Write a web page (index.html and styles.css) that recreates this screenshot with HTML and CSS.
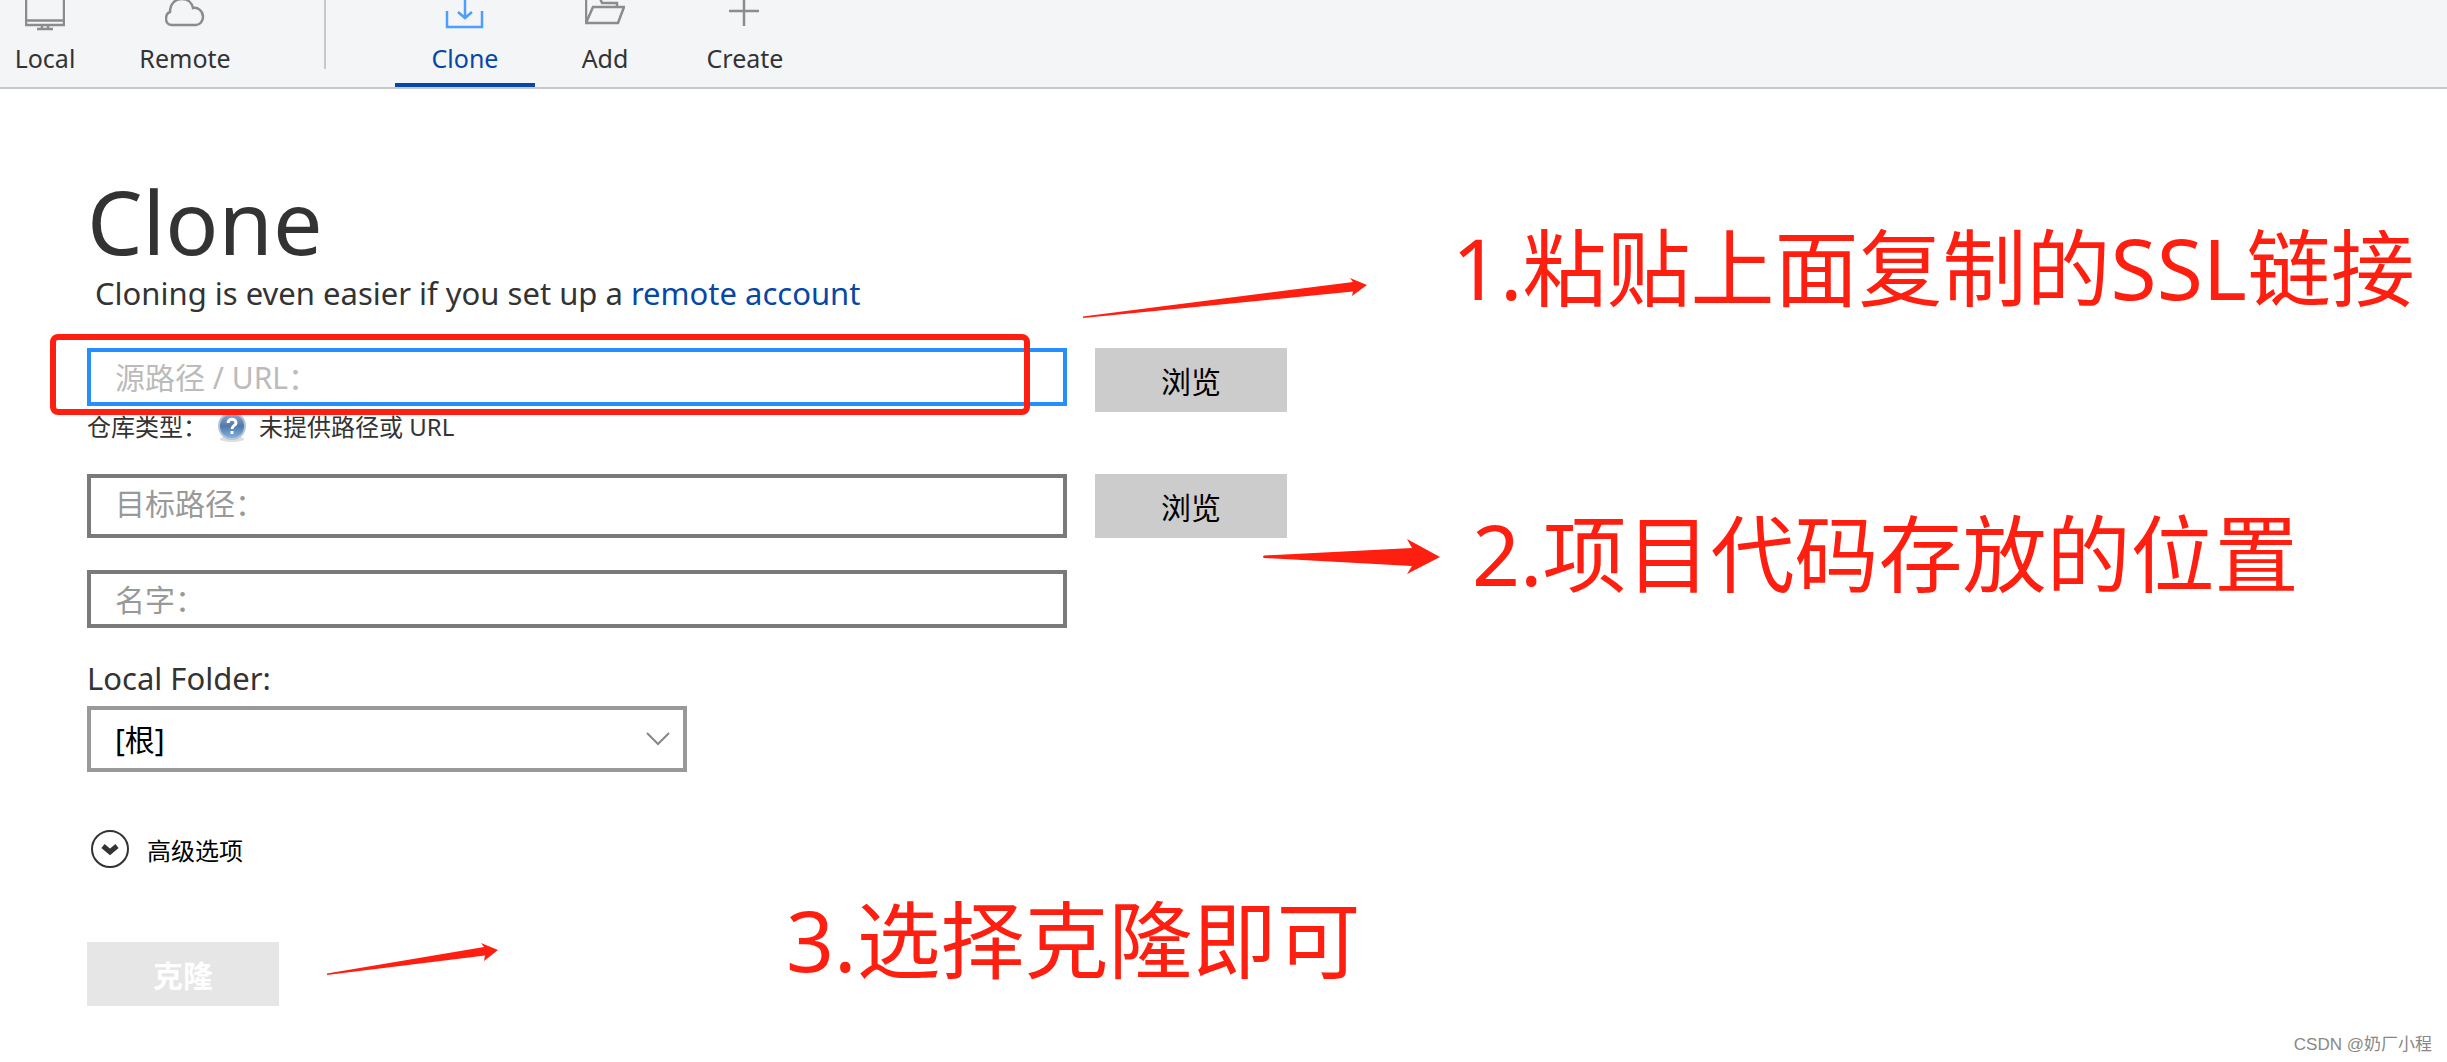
FILE: index.html
```html
<!DOCTYPE html>
<html lang="zh-CN">
  <head>
    <meta charset="utf-8">
    <meta name="viewport" content="width=device-width, initial-scale=1.0">
    <title>Clone</title>
    <link rel="stylesheet" href="styles.css">
  </head>
  <body>
    <nav class="toolbar">
      <a class="tab" href="#local">
        <svg class="tab-icon" viewBox="0 0 40 40" aria-hidden="true">
          <rect x="1" y="3" width="38" height="30"/>
          <path d="M1 28.5H39M17 33.5V37M23 33.5V37M12 37H28"/>
        </svg>
        <span>Local</span>
      </a>
      <a class="tab" href="#remote">
        <svg class="tab-icon" viewBox="0 0 40 40" aria-hidden="true">
          <path d="M7 33H31C35 33 38 29 38 25C38 19 33 15 28 16C27 11 23 7 17 7C10 7 5 12 5 20C2 21 1 24 1 27C1 30 3 33 7 33Z"/>
        </svg>
        <span>Remote</span>
      </a>
      <div class="divider"></div>
      <a class="tab active" href="#clone">
        <svg class="tab-icon" viewBox="0 0 40 40" aria-hidden="true">
          <path d="M2 19V35H37V19M20 0V25M13 20L20 26L27 20"/>
        </svg>
        <span>Clone</span>
      </a>
      <a class="tab" href="#add">
        <svg class="tab-icon" viewBox="0 0 40 40" aria-hidden="true">
          <path d="M1 31V4H14L17 11H32V15M1 31L8 15H39L33 31Z"/>
        </svg>
        <span>Add</span>
      </a>
      <a class="tab" href="#create">
        <svg class="tab-icon" viewBox="0 0 40 40" aria-hidden="true">
          <path d="M19 4V34M4 19H34"/>
        </svg>
        <span>Create</span>
      </a>
    </nav>

    <main class="page">
      <h1 class="title">Clone</h1>
      <p class="intro">Cloning is even easier if you set up a <a href="#account">remote account</a></p>

      <form class="clone-form">
        <div class="row">
          <input class="field focused" type="text" aria-label="源路径 / URL" placeholder="源路径 / URL：">
          <button class="button" type="button">浏览</button>
        </div>
        <p class="repo-type">
          <span>仓库类型：</span>
          <svg class="help-icon" viewBox="0 0 30 30" aria-hidden="true">
            <defs>
              <linearGradient id="help-fill" x1="0" y1="0" x2="0" y2="1">
                <stop offset="0" stop-color="#8fa9c9"/>
                <stop offset="0.5" stop-color="#4f78ad"/>
                <stop offset="1" stop-color="#86b0dc"/>
              </linearGradient>
            </defs>
            <ellipse class="help-shadow" cx="15" cy="27" rx="12" ry="3"/>
            <circle class="help-ring" cx="15" cy="14" r="14"/>
            <circle cx="15" cy="14" r="12" fill="url(#help-fill)"/>
            <path class="help-mark" d="M11 11C11 6 19 6 19 11C19 14 15 13 15 17M15 19V22"/>
          </svg>
          <span>未提供路径或 URL</span>
        </p>
        <div class="row">
          <input class="field tall" type="text" aria-label="目标路径" placeholder="目标路径：">
          <button class="button" type="button">浏览</button>
        </div>
        <div class="row name-row">
          <input class="field" type="text" aria-label="名字" placeholder="名字：">
        </div>

        <label class="folder-label" for="folder">Local Folder:</label>
        <div class="select-box">
          <select class="folder" id="folder">
            <option>[根]</option>
          </select>
          <svg class="chevron" viewBox="0 0 24 14" aria-hidden="true">
            <path d="M1 1L12 12L23 1"/>
          </svg>
        </div>

        <button class="advanced" type="button">
          <svg class="advanced-icon" viewBox="0 0 38 38" aria-hidden="true">
            <circle cx="19" cy="19" r="18"/>
            <path d="M12 16L19 22L26 16"/>
          </svg>
          <span>高级选项</span>
        </button>
        <button class="button submit" type="submit" disabled>克隆</button>
      </form>
    </main>

    <!-- notes drawn over the form -->
    <div class="mark-box"></div>
    <svg class="arrow arrow-1" viewBox="0 0 284 40" aria-hidden="true">
      <path d="M0 38.5L270 4L267 0L284 7L269 18L270 13.500L0 40Z"/>
    </svg>
    <p class="note note-1">1.粘贴上面复制的SSL链接</p>
    <svg class="arrow arrow-2" viewBox="0 0 177 36" aria-hidden="true">
      <path d="M1 16.500L149 9L144 0L177 18L144 35L149 27L1 19Q-1 18 1 16.500Z"/>
    </svg>
    <p class="note note-2">2.项目代码存放的位置</p>
    <svg class="arrow arrow-3" viewBox="0 0 171 32" aria-hidden="true">
      <path d="M0 30.500L157 4L154 0L171 7L157 18L158 12.500L0 32Z"/>
    </svg>
    <p class="note note-3">3.选择克隆即可</p>
    <p class="watermark">CSDN @奶厂小程</p>
  </body>
</html>
```

FILE: styles.css
```css
* {
  box-sizing: border-box;
}

body {
  position: relative;
  min-height: 100vh;
  margin: 0;
  background: #fff;
  color: #333;
  font-family: "Noto Sans", "Noto Sans CJK SC", sans-serif;
  overflow-x: hidden;
}

p {
  margin: 0;
}

a {
  color: #0747a6;
  text-decoration: none;
}

input,
select,
button {
  font-family: inherit;
}

/* toolbar */
.toolbar {
  display: flex;
  height: 89px;
  padding-right: 25px;
  margin-left: -25px;
  background: #f4f5f7;
  border-bottom: 2px solid #c8c8c8;
  overflow: hidden;
}

.tab {
  display: flex;
  flex-direction: column;
  align-items: center;
  justify-content: flex-end;
  width: 140px;
  padding-bottom: 7px;
  border-bottom: 4px solid transparent;
  color: #333;
  font-size: 25px;
  line-height: 36px;
}

.tab.active {
  color: #0747a6;
  border-color: #0747a6;
}

.tab-icon {
  flex: none;
  width: 40px;
  height: 40px;
  margin-bottom: 8px;
  fill: none;
  stroke: #8c8c8c;
  stroke-width: 2.5;
}

.active .tab-icon {
  stroke: #4c9fff;
}

.divider {
  width: 2px;
  height: 69px;
  margin: 0 69px;
  background: #c8c8c8;
}

/* form */
.page {
  padding: 82px 87px 56px;
}

.title {
  margin: 0;
  font-size: 88px;
  font-weight: 400;
  line-height: 100px;
}

.intro {
  margin: 0 0 33px 8px;
  font-size: 31px;
  line-height: 44px;
}

.clone-form {
  display: flex;
  flex-direction: column;
  align-items: flex-start;
  max-width: 1200px;
}

.row {
  display: grid;
  grid-template-columns: 1fr 192px;
  column-gap: 28px;
  align-items: start;
  width: 100%;
}

.field {
  width: 100%;
  height: 58px;
  padding: 0 24px;
  border: 4px solid #7a7a7a;
  border-radius: 0;
  background: #fff;
  font-size: 30px;
}

.field::placeholder {
  color: #999;
}

.focused {
  border-color: #268fff;
}

.focused::placeholder {
  color: #bbb;
}

.tall {
  height: 64px;
  padding-bottom: 6px;
}

.button {
  width: 192px;
  height: 64px;
  padding: 0;
  border: 0;
  background: #ccc;
  color: #000;
  font-size: 30px;
}

.repo-type {
  display: flex;
  align-items: center;
  height: 30px;
  margin-bottom: 32px;
  font-size: 24px;
  line-height: 30px;
}

.help-icon {
  width: 30px;
  height: 30px;
  margin: 0 12px 0 10px;
}

.help-shadow {
  fill: #ddd;
}

.help-ring {
  fill: #b4c4d8;
}

.help-mark {
  fill: none;
  stroke: #fff;
  stroke-width: 3;
}

.name-row {
  margin-top: 32px;
}

.folder-label {
  margin: 28px 0 6px;
  font-size: 31px;
  line-height: 44px;
}

.select-box {
  position: relative;
  width: 50%;
}

.folder {
  display: block;
  width: 100%;
  height: 66px;
  padding: 0 24px;
  border: 4px solid #999;
  border-radius: 0;
  background: #fff;
  color: #000;
  font-size: 30px;
  appearance: none;
}

.chevron {
  position: absolute;
  top: 26px;
  right: 17px;
  width: 24px;
  height: 14px;
  fill: none;
  stroke: #888;
  stroke-width: 2;
  pointer-events: none;
}

.advanced {
  display: flex;
  align-items: center;
  gap: 18px;
  height: 38px;
  margin: 58px 0 74px 4px;
  padding: 0;
  border: 0;
  background: none;
  color: #000;
  font-size: 24px;
}

.advanced-icon {
  width: 38px;
  height: 38px;
  fill: none;
  stroke: #333;
  stroke-width: 2;
}

.advanced-icon path {
  stroke-width: 5;
}

.submit {
  background: #e6e6e6;
  color: #fff;
  font-weight: 700;
}

/* notes */
.mark-box {
  position: absolute;
  top: 334px;
  left: 50px;
  width: 980px;
  height: 81px;
  border: 6px solid #ff1f11;
  border-radius: 8px;
  pointer-events: none;
}

.arrow {
  position: absolute;
  fill: #ff1f11;
}

.arrow-1 {
  top: 278px;
  left: 1083px;
  width: 284px;
}

.arrow-2 {
  top: 539px;
  left: 1263px;
  width: 177px;
}

.arrow-3 {
  top: 943px;
  left: 327px;
  width: 171px;
}

.note {
  position: absolute;
  color: #ff1f11;
  font-size: 84px;
  line-height: 100px;
  white-space: nowrap;
}

.note-1 {
  top: 218px;
  left: 1452px;
}

.note-2 {
  top: 504px;
  left: 1472px;
}

.note-3 {
  top: 890px;
  left: 786px;
}

.watermark {
  position: absolute;
  right: 15px;
  bottom: 5px;
  color: #888;
  font-family: "Liberation Sans", "Noto Sans CJK SC", sans-serif;
  font-size: 17px;
  line-height: 24px;
}
```
